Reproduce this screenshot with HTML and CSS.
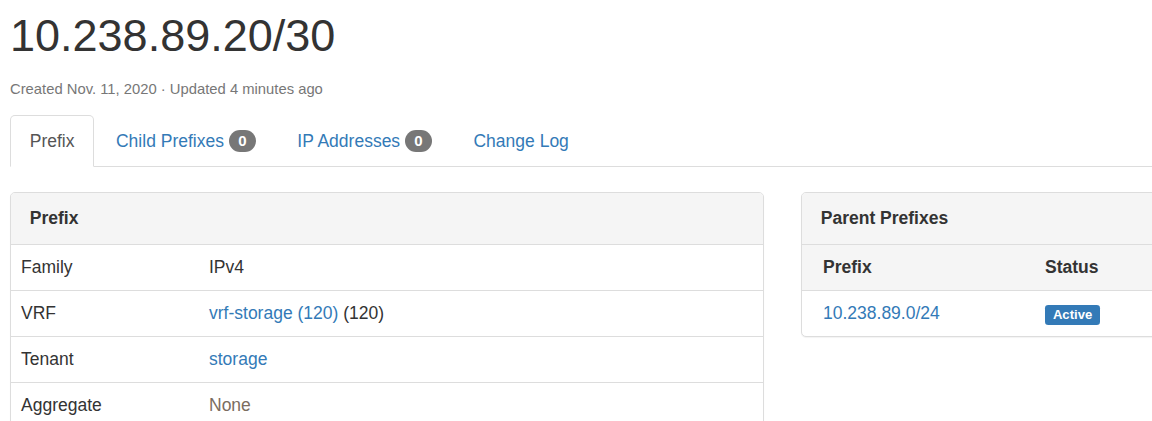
FILE: index.html
```html
<!DOCTYPE html>
<html lang="en">
<head>
<meta charset="utf-8">
<title>10.238.89.20/30</title>
<link rel="stylesheet" href="styles.css">
</head>
<body>
<div class="page">
  <h1 class="title">10.238.89.20/30</h1>
  <p class="meta">Created Nov. 11, 2020 &middot; Updated 4 minutes ago</p>

  <ul class="tabs">
    <li class="tab active"><a href="#">Prefix</a></li>
    <li class="tab"><a href="#">Child Prefixes <span class="badge">0</span></a></li>
    <li class="tab"><a href="#">IP Addresses <span class="badge">0</span></a></li>
    <li class="tab"><a href="#">Change Log</a></li>
  </ul>

  <div class="columns">
    <div class="panel">
      <div class="panel-heading"><strong>Prefix</strong></div>
      <table class="attr-table">
        <tr><td class="key">Family</td><td>IPv4</td></tr>
        <tr><td class="key">VRF</td><td><a href="#">vrf-storage (120)</a> (120)</td></tr>
        <tr><td class="key">Tenant</td><td><a href="#">storage</a></td></tr>
        <tr><td class="key">Aggregate</td><td><span class="muted">None</span></td></tr>
      </table>
    </div>

    <div class="panel">
      <div class="panel-heading"><strong>Parent Prefixes</strong></div>
      <table class="list-table">
        <thead>
          <tr><th class="col-prefix">Prefix</th><th>Status</th></tr>
        </thead>
        <tbody>
          <tr><td><a href="#">10.238.89.0/24</a></td><td><span class="label">Active</span></td></tr>
        </tbody>
      </table>
    </div>
  </div>
</div>
</body>
</html>
```

FILE: styles.css
```css
html, body {
  margin: 0;
  padding: 0;
  overflow: hidden;
  background: #fff;
}

body {
  font-family: "Liberation Sans", Arial, Helvetica, sans-serif;
  font-size: 17.5px;
  line-height: 25px;
  color: #333;
}

a {
  color: #337ab7;
  text-decoration: none;
}

.page {
  padding: 0 0 0 10px;
  width: 1600px;
}

.title {
  margin: 11px 0 0;
  font-size: 45px;
  line-height: 49.5px;
  font-weight: 400;
  color: #333;
}

.meta {
  margin: 18.5px 0 0;
  font-size: 14.8px;
  line-height: 21.4px;
  color: #777;
}

.tabs {
  list-style: none;
  margin: 14.6px 0 25px;
  padding: 0;
  display: flex;
  border-bottom: 1px solid #ddd;
}

.tab {
  margin-right: 2px;
  margin-bottom: -1px;
}

.tab a {
  display: block;
  padding: 12.5px 18.75px;
  border: 1px solid transparent;
  border-radius: 5px 5px 0 0;
  line-height: 25px;
}

.tab.active a {
  color: #555;
  background: #fff;
  border-color: #ddd;
  border-bottom-color: transparent;
}

.badge {
  display: inline-block;
  min-width: 10px;
  padding: 3.75px 8.5px;
  font-size: 15px;
  font-weight: 700;
  line-height: 1;
  color: #fff;
  text-align: center;
  white-space: nowrap;
  vertical-align: middle;
  background: #777;
  border-radius: 12.5px;
  position: relative;
  top: -1px;
}

.columns {
  display: grid;
  grid-template-columns: 754px 754px;
  column-gap: 37px;
  align-items: start;
}

.panel {
  border: 1px solid #ddd;
  border-radius: 5px;
  background: #fff;
  box-shadow: 0 1px 1px rgba(0, 0, 0, 0.05);
  overflow: hidden;
}

.panel-heading {
  padding: 13px 18.75px;
  background: #f5f5f5;
  border-bottom: 1px solid #ddd;
  color: #333;
}

table {
  width: 100%;
  border-collapse: collapse;
  border-spacing: 0;
}

.attr-table td {
  padding: 10px;
  border-top: 1px solid #ddd;
  vertical-align: top;
  text-align: left;
}

.attr-table tr:first-child td {
  border-top: 0;
}

.attr-table .key {
  width: 25%;
}

.muted {
  color: #7b6d5f;
}

.list-table th,
.list-table td {
  padding: 10px 10px 10px 21px;
  text-align: left;
  vertical-align: top;
}

.list-table th {
  background: #f5f5f5;
  font-weight: 700;
  border-bottom: 1px solid #ddd;
}

.list-table .col-prefix {
  width: 191px;
}

.label {
  display: inline-block;
  padding: 2.6px 7.9px 3.9px;
  font-size: 13.1px;
  font-weight: 700;
  line-height: 1;
  color: #fff;
  background: #337ab7;
  border-radius: 3.3px;
  vertical-align: baseline;
}
```
